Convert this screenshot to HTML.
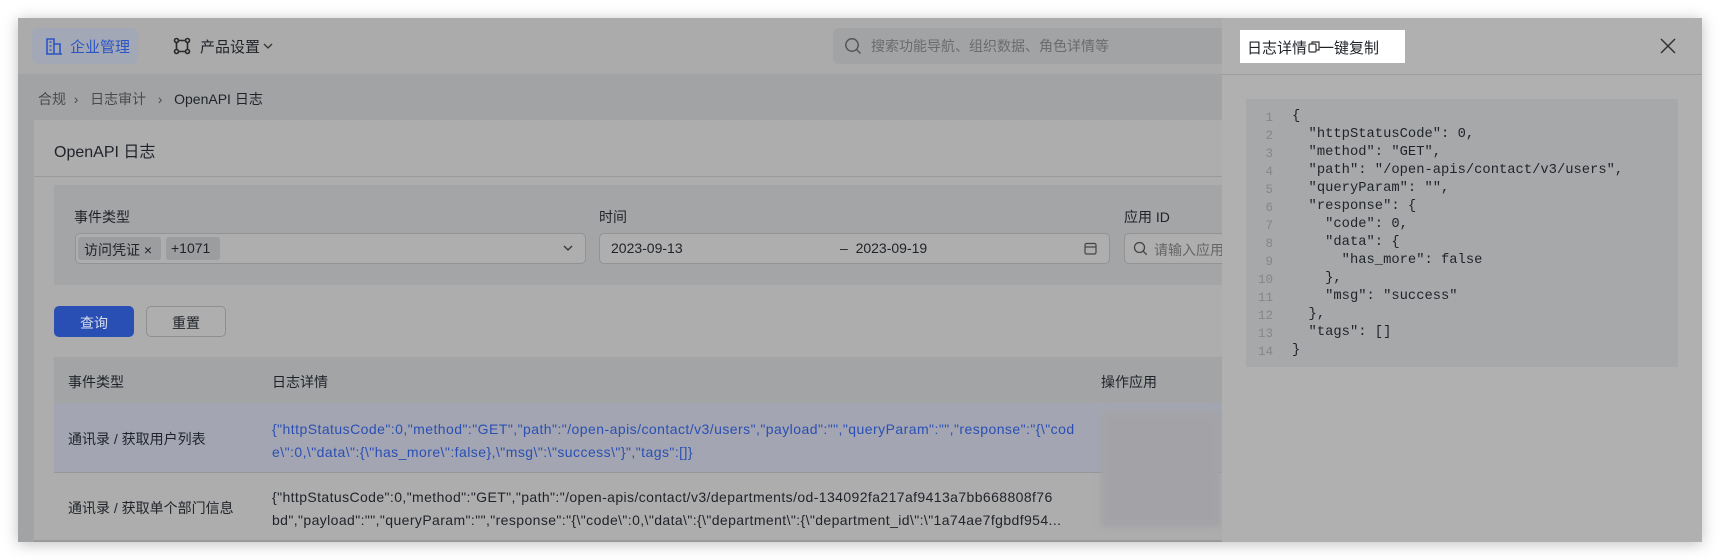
<!DOCTYPE html>
<html><head><meta charset="utf-8"><style>
*{box-sizing:border-box;margin:0;padding:0}
body{width:1720px;height:560px;background:#fff;font-family:"Liberation Sans","Noto Sans CJK SC",sans-serif;position:relative;overflow:hidden;color:#1f2329}
.win{position:absolute;left:18px;top:18px;width:1684px;height:524px;background:#a2a3a5;overflow:hidden;box-shadow:0 2px 14px rgba(0,0,0,.25)}
.hdr{position:absolute;left:0;top:0;width:1684px;height:56px;background:#ababab}
.a{position:absolute}
.t{position:absolute;white-space:nowrap}
.mono{font-family:"Liberation Mono",monospace}
</style></head><body>
<div class="win">
 <div class="hdr"></div>
 <div class="a" style="left:14px;top:10px;width:106px;height:36px;background:#a3a8b6;border-radius:6px"></div>
 <svg class="a" style="left:27px;top:19px" width="18" height="18" viewBox="0 0 18 18" fill="none" stroke="#2c55c4" stroke-width="1.6"><path d="M2 17V2h7v15M9 7h6v10M1 17h16M4.5 5h2M4.5 9h2M4.5 13h2"/></svg>
 <div class="t" style="left:52px;top:18px;font-size:15px;color:#2c55c4">企业管理</div>
 <svg class="a" style="left:155px;top:19px" width="18" height="18" viewBox="0 0 18 18" fill="none" stroke="#2a2a2a" stroke-width="1.6"><circle cx="3.5" cy="3.5" r="2"/><circle cx="14.5" cy="3.5" r="2"/><circle cx="3.5" cy="14.5" r="2"/><circle cx="14.5" cy="14.5" r="2"/><path d="M5.5 3.5h7M5.5 14.5h7M3.5 5.5v7M14.5 5.5v7"/></svg>
 <div class="t" style="left:182px;top:18px;font-size:15px;color:#1f2329">产品设置</div>
 <svg class="a" style="left:245px;top:24px" width="10" height="8" viewBox="0 0 10 8" fill="none" stroke="#333" stroke-width="1.3"><path d="M1 2l4 4 4-4"/></svg>
 <div class="a" style="left:815px;top:10px;width:406px;height:36px;background:#a2a3a5;border-radius:6px"></div>
 <svg class="a" style="left:826px;top:19px" width="18" height="18" viewBox="0 0 18 18" fill="none" stroke="#555" stroke-width="1.5"><circle cx="8" cy="8" r="6.2"/><path d="M12.5 12.5l4 4"/></svg>
 <div class="t" style="left:853px;top:18px;font-size:14px;color:#6a6b6d">搜索功能导航、组织数据、角色详情等</div>

 <div class="t" style="left:20px;top:71px;font-size:14px;color:#4a4b4d">合规 &nbsp;›&nbsp;&nbsp; 日志审计 &nbsp;&nbsp;›&nbsp;&nbsp; <span style="color:#1f2329">OpenAPI 日志</span></div>

 <div class="a" style="left:16px;top:102px;width:1300px;height:440px;background:#adadad"></div>
 <div class="t" style="left:36px;top:120px;font-size:16px;color:#1f2329">OpenAPI 日志</div>
 <div class="a" style="left:16px;top:158px;width:1300px;height:1px;background:#9a9a9a"></div>
 <div class="a" style="left:36px;top:167px;width:1200px;height:100px;background:#a4a5a7"></div>
 <div class="t" style="left:56px;top:189px;font-size:14px">事件类型</div>
 <div class="a" style="left:57px;top:215px;width:511px;height:31px;border:1px solid #929395;border-radius:5px;background:#aeaeae"></div>
 <div class="a" style="left:60px;top:219px;width:83px;height:23px;background:#9c9d9f;border-radius:3px"></div>
 <div class="t" style="left:66px;top:222px;font-size:14px">访问凭证 ×</div>
 <div class="a" style="left:148px;top:219px;width:54px;height:23px;background:#9c9d9f;border-radius:3px"></div>
 <div class="t" style="left:153px;top:222px;font-size:14px">+1071</div>
 <svg class="a" style="left:545px;top:226px" width="10" height="8" viewBox="0 0 10 8" fill="none" stroke="#333" stroke-width="1.3"><path d="M1 2l4 4 4-4"/></svg>
 <div class="t" style="left:581px;top:189px;font-size:14px">时间</div>
 <div class="a" style="left:581px;top:215px;width:511px;height:31px;border:1px solid #929395;border-radius:5px;background:#aeaeae"></div>
 <div class="t" style="left:593px;top:222px;font-size:14px">2023-09-13</div>
 <div class="t" style="left:822px;top:222px;font-size:14px">– &nbsp;2023-09-19</div>
 <svg class="a" style="left:1066px;top:224px" width="13" height="13" viewBox="0 0 13 13" fill="none" stroke="#444" stroke-width="1.2"><rect x="1" y="1.5" width="11" height="10.5" rx="1.5"/><path d="M1 5h11"/></svg>
 <div class="t" style="left:1106px;top:189px;font-size:14px">应用 ID</div>
 <div class="a" style="left:1106px;top:215px;width:200px;height:31px;border:1px solid #929395;border-radius:5px;background:#aeaeae"></div>
 <svg class="a" style="left:1115px;top:223px" width="15" height="15" viewBox="0 0 15 15" fill="none" stroke="#444" stroke-width="1.3"><circle cx="6.5" cy="6.5" r="5"/><path d="M10.2 10.2l3.5 3.5"/></svg>
 <div class="t" style="left:1136px;top:222px;font-size:14px;color:#666">请输入应用</div>

 <div class="a" style="left:36px;top:288px;width:80px;height:31px;background:#2a4fb4;border-radius:5px"></div>
 <div class="t" style="left:62px;top:295px;font-size:14px;color:#d8ddea">查询</div>
 <div class="a" style="left:128px;top:288px;width:80px;height:31px;border:1px solid #8e8f91;border-radius:5px;background:#aeaeae"></div>
 <div class="t" style="left:154px;top:295px;font-size:14px">重置</div>

 <div class="a" style="left:36px;top:339px;width:1200px;height:46px;background:#a3a4a6"></div>
 <div class="t" style="left:50px;top:354px;font-size:14px">事件类型</div>
 <div class="t" style="left:254px;top:354px;font-size:14px">日志详情</div>
 <div class="t" style="left:1083px;top:354px;font-size:14px">操作应用</div>
 <div class="a" style="left:36px;top:385px;width:1200px;height:69px;background:#a3a6b2"></div>
 <div class="a" style="left:36px;top:454px;width:1200px;height:1px;background:#979799"></div>
 <div class="t" style="left:50px;top:411px;font-size:14px">通讯录 / 获取用户列表</div>
 <div class="t" style="left:254px;top:400px;font-size:14px;letter-spacing:0.45px;color:#2a4fb4;line-height:23px">{"httpStatusCode":0,"method":"GET","path":"/open-apis/contact/v3/users","payload":"","queryParam":"","response":"{\"cod<br>e\":0,\"data\":{\"has_more\":false},\"msg\":\"success\"}","tags":[]}</div>
 <div class="t" style="left:50px;top:480px;font-size:14px">通讯录 / 获取单个部门信息</div>
 <div class="t" style="left:254px;top:468px;font-size:14px;letter-spacing:0.4px;color:#1f2329;line-height:23px">{"httpStatusCode":0,"method":"GET","path":"/open-apis/contact/v3/departments/od-134092fa217af9413a7bb668808f76<br>bd","payload":"","queryParam":"","response":"{\"code\":0,\"data\":{\"department\":{\"department_id\":\"1a74ae7fgbdf954...</div>
 <div class="a" style="left:1083px;top:393px;width:120px;height:116px;background:#a3a3a7;filter:blur(3px)"></div>
 <div class="a" style="left:16px;top:522px;width:1300px;height:2px;background:#9a9a9a"></div>

 <!-- drawer -->
 <div class="a" style="left:1204px;top:0;width:480px;height:524px;background:#b0b0b0"></div>
 <div class="a" style="left:1204px;top:56px;width:480px;height:1px;background:#9d9d9d"></div>
 <div class="a" style="left:1222px;top:12px;width:165px;height:33px;background:#fff"></div>
 <div class="t" style="left:1229px;top:19px;font-size:15px;color:#1f2329">日志详情<span style="display:inline-block;width:12px"></span>一键复制</div>
 <svg class="a" style="left:1290px;top:23px" width="12" height="12" viewBox="0 0 12 12" fill="none" stroke="#333" stroke-width="1.2"><rect x="1" y="3" width="7" height="8" rx="1"/><path d="M4 3V1h7v8H8"/></svg>
 <svg class="a" style="left:1642px;top:20px" width="16" height="16" viewBox="0 0 16 16" stroke="#333" stroke-width="1.5"><path d="M1 1l14 14M15 1L1 15"/></svg>
 <div class="a" style="left:1228px;top:81px;width:432px;height:268px;background:#a7a8aa"></div>
 <div class="t mono" style="left:1235px;top:91px;width:20px;text-align:right;font-size:12.5px;line-height:18px;color:#858688;white-space:pre">1
2
3
4
5
6
7
8
9
10
11
12
13
14</div>
 <div class="t mono" style="left:1274px;top:90px;font-size:13.8px;line-height:18px;color:#1f2329;white-space:pre">{
  "httpStatusCode": 0,
  "method": "GET",
  "path": "/open-apis/contact/v3/users",
  "queryParam": "",
  "response": {
    "code": 0,
    "data": {
      "has_more": false
    },
    "msg": "success"
  },
  "tags": []
}</div>
</div>
</body></html>
